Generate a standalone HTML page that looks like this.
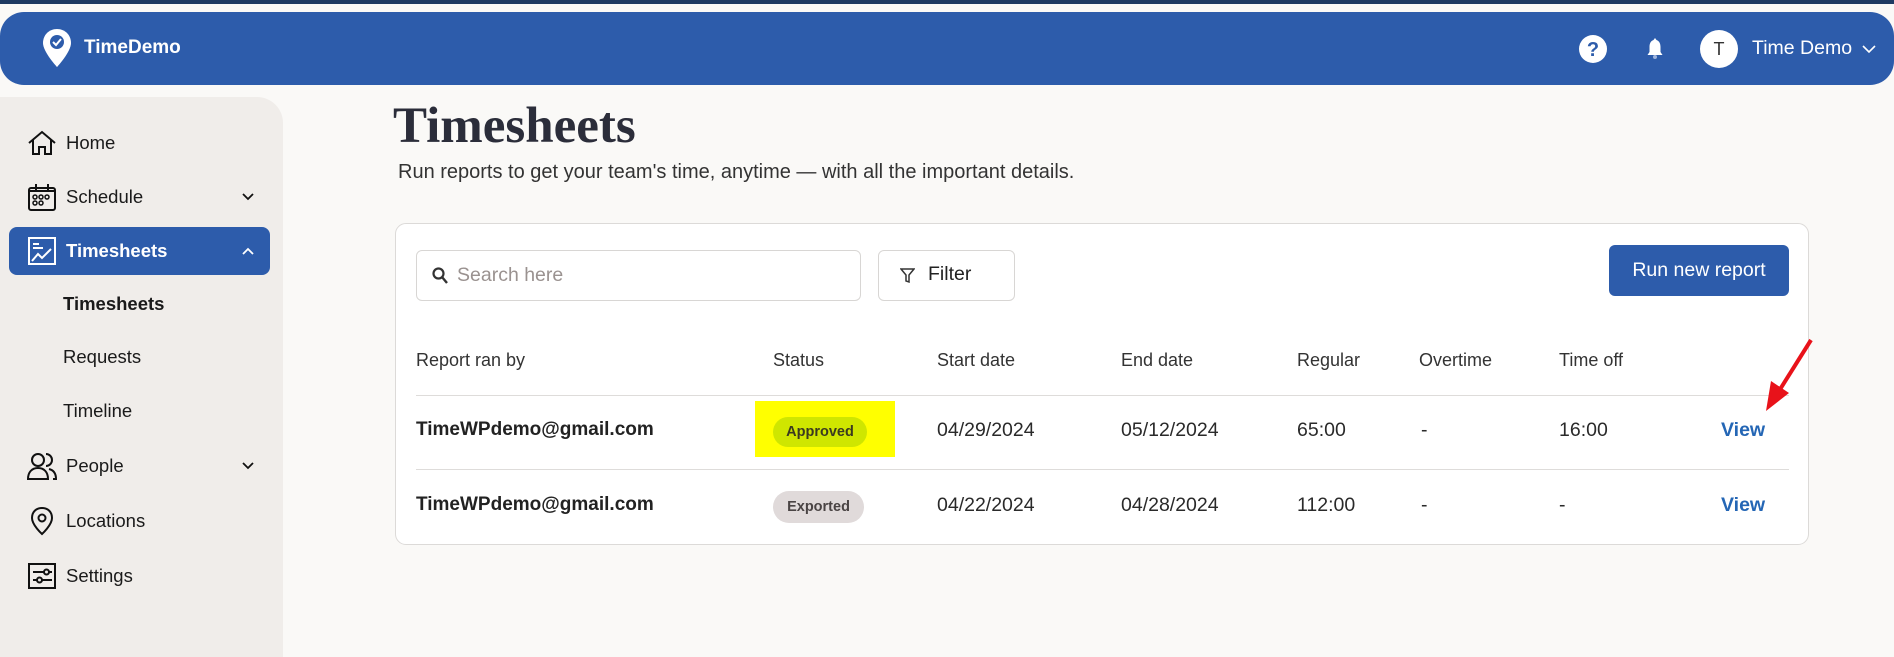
<!DOCTYPE html>
<html><head><meta charset="utf-8"><style>
*{box-sizing:border-box;margin:0;padding:0}
body{width:1894px;height:635px;overflow:hidden;background:#faf9f7;font-family:"Liberation Sans",sans-serif;position:relative;color:#222}
.abs{position:absolute}
.top{left:0;top:0;width:1894px;height:4px;background:#1e3a62}
.hdr{left:0;top:12px;width:1894px;height:73px;background:#2d5cab;border-radius:24px}
.side{left:0;top:97px;width:283px;height:560px;background:#f0edea;border-radius:0 26px 0 0}
.mi{position:absolute;left:27px;font-size:18.5px;color:#1a1a1a;display:flex;align-items:center;height:30px}
.mi svg{width:30px;height:30px;margin-right:9px}
.sub{position:absolute;left:63px;font-size:18.5px;color:#1a1a1a}
.card{left:395px;top:223px;width:1414px;height:322px;background:#fff;border:1px solid #dcdad8;border-radius:11px}
.th{position:absolute;top:350px;font-size:18px;color:#333}
.td{position:absolute;font-size:19.5px;color:#2a2a2a}
.b{font-weight:bold;color:#222;font-size:19px}
.view{color:#2466b5;font-weight:bold}
</style></head><body>
<div class="abs top"></div>
<div class="abs hdr"></div>
<svg class="abs" style="left:42px;top:28px" width="30" height="40" viewBox="0 0 30 40"><path d="M15 1C7 1 1 7 1 15c0 9 14 24 14 24s14-15 14-24C29 7 23 1 15 1z" fill="#fff"/><circle cx="15" cy="14" r="7" fill="#2d5cab"/><path d="M11 14l3 3 5-6" stroke="#fff" stroke-width="2" fill="none"/></svg>
<div class="abs" style="left:84px;top:37px;color:#fff;font-size:19px;font-weight:bold">TimeDemo</div>
<svg class="abs" style="left:1579px;top:35px" width="28" height="28" viewBox="0 0 28 28"><circle cx="14" cy="14" r="14" fill="#fff"/><text x="14" y="21" text-anchor="middle" font-family="Liberation Sans" font-weight="bold" font-size="20" fill="#2d5cab">?</text></svg>
<svg class="abs" style="left:1645px;top:36px" width="20" height="24" viewBox="0 0 20 24"><path d="M10 2l1.5 2c3 1 4 4 4 7v5l2 3H2.5l2-3v-5c0-3 1-6 4-7z" fill="#fff"/><circle cx="10" cy="21" r="2" fill="#9fb4dc"/></svg>
<div class="abs" style="left:1700px;top:30px;width:38px;height:38px;border-radius:50%;background:#fff;color:#333;font-size:18px;text-align:center;line-height:38px">T</div>
<div class="abs" style="left:1752px;top:37px;color:#fff;font-size:19.5px">Time Demo</div>
<svg class="abs" style="left:1862px;top:44px" width="14" height="10" viewBox="0 0 14 10"><path d="M1 2l6 6 6-6" stroke="#fff" stroke-width="1.6" fill="none"/></svg>

<div class="abs side"></div>
<div class="mi" style="top:128px"><svg viewBox="0 0 30 30"><path d="M2 15L15 4l13 11M6 12v14h6v-7h6v7h6V12" stroke="#111" stroke-width="2" fill="none"/></svg>Home</div>
<div class="mi" style="top:182px"><svg viewBox="0 0 30 30"><rect x="2" y="6" width="26" height="22" rx="2" stroke="#111" stroke-width="2" fill="none"/><path d="M9 2v7M21 2v7M2 9h26" stroke="#111" stroke-width="2"/><g fill="none" stroke="#111" stroke-width="1.5"><circle cx="8" cy="15" r="2"/><circle cx="14" cy="15" r="2"/><circle cx="20" cy="15" r="2"/><circle cx="8" cy="21" r="2"/><circle cx="14" cy="21" r="2"/></g></svg>Schedule</div>
<svg class="abs" style="left:242px;top:193px" width="12" height="8" viewBox="0 0 12 8"><path d="M1 1l5 5 5-5" stroke="#111" stroke-width="1.8" fill="none"/></svg>
<div class="abs" style="left:9px;top:227px;width:261px;height:48px;background:#2d5cab;border-radius:8px"></div>
<div class="mi" style="top:236px;color:#fff;font-weight:bold"><svg viewBox="0 0 30 30"><rect x="2" y="2" width="26" height="26" stroke="#fff" stroke-width="2" fill="none"/><path d="M6 8h6M6 12h10M5 25l6-7 4 4 9-9" stroke="#fff" stroke-width="2" fill="none"/></svg>Timesheets</div>
<svg class="abs" style="left:242px;top:247px" width="12" height="8" viewBox="0 0 12 8"><path d="M1 7l5-5 5 5" stroke="#fff" stroke-width="1.8" fill="none"/></svg>
<div class="sub" style="top:293px;font-weight:bold">Timesheets</div>
<div class="sub" style="top:346px">Requests</div>
<div class="sub" style="top:400px">Timeline</div>
<div class="mi" style="top:451px"><svg viewBox="0 0 30 30"><circle cx="11" cy="9" r="6" stroke="#111" stroke-width="2" fill="none"/><path d="M1 28c0-7 4-11 10-11s10 4 10 11zM19 3a6 6 0 010 12M22 18c4 1 7 4 7 10h-3" stroke="#111" stroke-width="2" fill="none"/></svg>People</div>
<svg class="abs" style="left:242px;top:462px" width="12" height="8" viewBox="0 0 12 8"><path d="M1 1l5 5 5-5" stroke="#111" stroke-width="1.8" fill="none"/></svg>
<div class="mi" style="top:506px"><svg viewBox="0 0 30 30"><path d="M15 2C9 2 5 6 5 12c0 7 10 16 10 16s10-9 10-16c0-6-4-10-10-10z" stroke="#111" stroke-width="2" fill="none"/><circle cx="15" cy="12" r="3.5" stroke="#111" stroke-width="2" fill="none"/></svg>Locations</div>
<div class="mi" style="top:561px"><svg viewBox="0 0 30 30"><rect x="2" y="3" width="26" height="24" stroke="#111" stroke-width="2" fill="none"/><path d="M6 11h11M22 11h3M6 19h4M15 19h10" stroke="#111" stroke-width="2"/><circle cx="19.5" cy="11" r="2.5" stroke="#111" stroke-width="2" fill="none"/><circle cx="12.5" cy="19" r="2.5" stroke="#111" stroke-width="2" fill="none"/></svg>Settings</div>

<div class="abs" style="left:393px;top:97px;font-family:'Liberation Serif',serif;font-size:51px;font-weight:bold;color:#2b2d3a">Timesheets</div>
<div class="abs" style="left:398px;top:161px;font-size:20px;color:#333">Run reports to get your team's time, anytime — with all the important details.</div>

<div class="abs card"></div>
<div class="abs" style="left:416px;top:250px;width:445px;height:51px;border:1px solid #d8d6d4;border-radius:6px"></div>
<svg class="abs" style="left:432px;top:267px" width="16" height="17" viewBox="0 0 16 17"><circle cx="6.5" cy="6.5" r="5" stroke="#333" stroke-width="2.2" fill="none"/><path d="M10 10l5 6" stroke="#333" stroke-width="2.4"/></svg>
<div class="abs" style="left:457px;top:264px;font-size:19.5px;color:#9a9290">Search here</div>
<div class="abs" style="left:878px;top:250px;width:137px;height:51px;border:1px solid #d8d6d4;border-radius:6px"></div>
<svg class="abs" style="left:900px;top:268px" width="15" height="16" viewBox="0 0 15 16"><path d="M1 1h13L9 7v7l-3-1V7z" stroke="#333" stroke-width="1.5" fill="none"/></svg>
<div class="abs" style="left:928px;top:263px;font-size:19.5px;color:#222">Filter</div>
<div class="abs" style="left:1609px;top:245px;width:180px;height:51px;background:#2d5cab;border-radius:6px;color:#fff;font-size:19.5px;text-align:center;line-height:51px">Run new report</div>

<div class="th" style="left:416px">Report ran by</div>
<div class="th" style="left:773px">Status</div>
<div class="th" style="left:937px">Start date</div>
<div class="th" style="left:1121px">End date</div>
<div class="th" style="left:1297px">Regular</div>
<div class="th" style="left:1419px">Overtime</div>
<div class="th" style="left:1559px">Time off</div>
<div class="abs" style="left:416px;top:395px;width:1373px;height:1px;background:#dedcda"></div>
<div class="abs" style="left:416px;top:469px;width:1373px;height:1px;background:#dedcda"></div>

<div class="abs" style="left:755px;top:401px;width:140px;height:56px;background:#ffff00"></div>
<div class="abs" style="left:773px;top:417px;width:94px;height:30px;background:#cfe600;border-radius:15px;font-size:14.5px;font-weight:bold;text-align:center;line-height:30px;color:#3a3a20">Approved</div>
<div class="abs" style="left:773px;top:491px;width:91px;height:32px;background:#e0dada;border-radius:16px;font-size:14.5px;font-weight:bold;text-align:center;line-height:32px;color:#4a4444">Exported</div>

<div class="td b" style="left:416px;top:419px">TimeWPdemo@gmail.com</div>
<div class="td" style="left:937px;top:419px">04/29/2024</div>
<div class="td" style="left:1121px;top:419px">05/12/2024</div>
<div class="td" style="left:1297px;top:419px">65:00</div>
<div class="td" style="left:1421px;top:419px">-</div>
<div class="td" style="left:1559px;top:419px">16:00</div>
<div class="td view" style="left:1721px;top:419px">View</div>

<div class="td b" style="left:416px;top:494px">TimeWPdemo@gmail.com</div>
<div class="td" style="left:937px;top:494px">04/22/2024</div>
<div class="td" style="left:1121px;top:494px">04/28/2024</div>
<div class="td" style="left:1297px;top:494px">112:00</div>
<div class="td" style="left:1421px;top:494px">-</div>
<div class="td" style="left:1559px;top:494px">-</div>
<div class="td view" style="left:1721px;top:494px">View</div>

<svg class="abs" style="left:1755px;top:335px" width="60" height="80" viewBox="0 0 60 80"><path d="M56 5L24 56" stroke="#e8121a" stroke-width="4"/><path d="M11 76L16 46L34 58z" fill="#e8121a"/></svg>
</body></html>
